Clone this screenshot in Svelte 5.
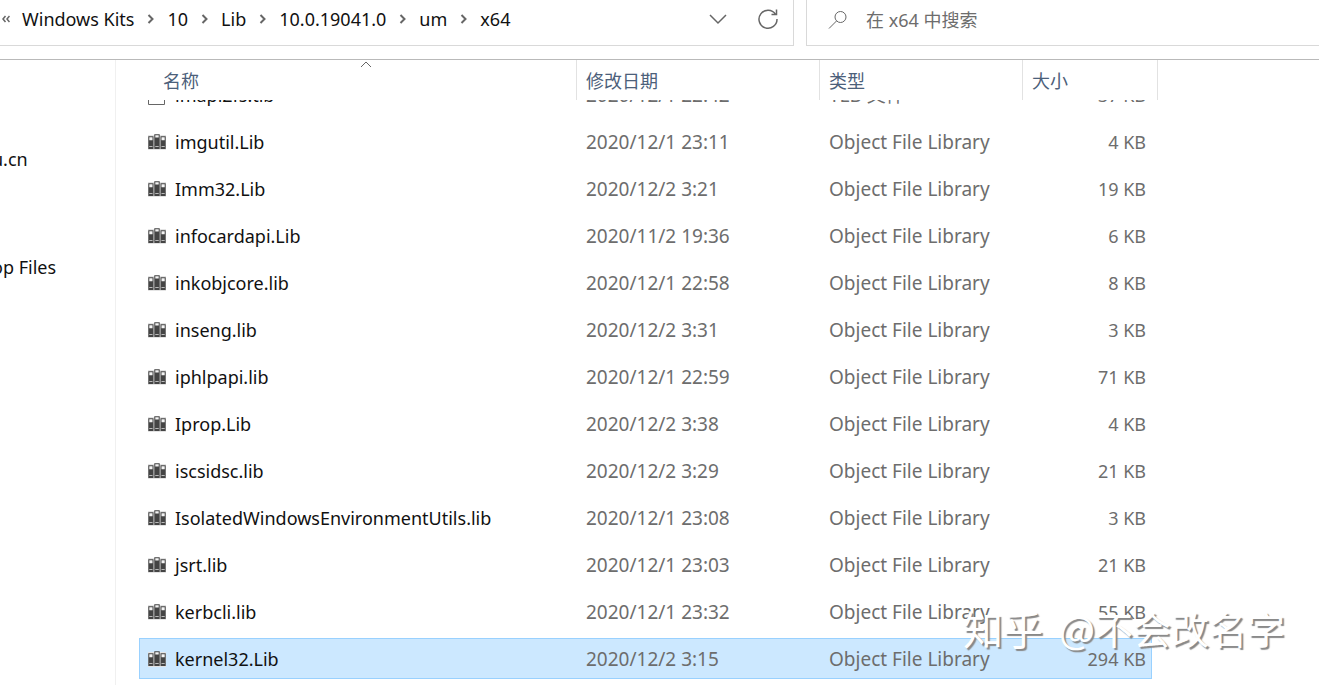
<script lang="ts">
  import { onMount } from 'svelte';

  interface FileRow {
    name: string;
    modified: string;
    type: string;
    size: string;
  }

  const library = 'Object File Library';

  const files: FileRow[] = [
    { name: 'imapi2fs.tlb', modified: '2020/12/1 22:42', type: 'TLB 文件', size: '37 KB' },
    { name: 'imgutil.Lib', modified: '2020/12/1 23:11', type: library, size: '4 KB' },
    { name: 'Imm32.Lib', modified: '2020/12/2 3:21', type: library, size: '19 KB' },
    { name: 'infocardapi.Lib', modified: '2020/11/2 19:36', type: library, size: '6 KB' },
    { name: 'inkobjcore.lib', modified: '2020/12/1 22:58', type: library, size: '8 KB' },
    { name: 'inseng.lib', modified: '2020/12/2 3:31', type: library, size: '3 KB' },
    { name: 'iphlpapi.lib', modified: '2020/12/1 22:59', type: library, size: '71 KB' },
    { name: 'Iprop.Lib', modified: '2020/12/2 3:38', type: library, size: '4 KB' },
    { name: 'iscsidsc.lib', modified: '2020/12/2 3:29', type: library, size: '21 KB' },
    { name: 'IsolatedWindowsEnvironmentUtils.lib', modified: '2020/12/1 23:08', type: library, size: '3 KB' },
    { name: 'jsrt.lib', modified: '2020/12/1 23:03', type: library, size: '21 KB' },
    { name: 'kerbcli.lib', modified: '2020/12/1 23:32', type: library, size: '55 KB' },
    { name: 'kernel32.Lib', modified: '2020/12/2 3:15', type: library, size: '294 KB' }
  ];

  const crumbs = ['Windows Kits', '10', 'Lib', '10.0.19041.0', 'um', 'x64'];
  const columns = ['名称', '修改日期', '类型', '大小'];

  let selected = $state('kernel32.Lib');
  let list: HTMLElement;

  // Open with the selected row in view
  onMount(() => {
    list.scrollTop = list.scrollHeight;
  });
</script>

<div class="explorer">
  <header class="toolbar">
    <div class="address">
      <button class="more" aria-label="Parent folders">
        <svg width="8" height="8" viewBox="0 0 8 8"><path d="M3.500 1 1 4l2.500 3M7.500 1 5 4l2.500 3" /></svg>
      </button>
      <nav class="crumbs">
        {#each crumbs as crumb, i}
          {#if i > 0}
            <svg width="7" height="10" viewBox="0 0 7 10"><path d="M1.500 1l4 4-4 4" /></svg>
          {/if}
          <a href="#{crumb}">{crumb}</a>
        {/each}
      </nav>
      <button aria-label="Recent locations">
        <svg width="18" height="18" viewBox="0 0 18 18"><path d="M1 5l8 8 8-8" /></svg>
      </button>
      <button aria-label="Refresh">
        <svg width="22" height="22" viewBox="0 0 22 22">
          <path d="M18.500 6.300A9 9 0 1 0 20 11M19.500 1.500v5h-5" />
        </svg>
      </button>
    </div>
    <label class="search">
      <svg width="20" height="20" viewBox="0 0 20 20">
        <circle cx="12.500" cy="7" r="5.500" />
        <path d="M8.600 10.900 1 18.500" />
      </svg>
      <input type="text" placeholder="在 x64 中搜索" aria-label="搜索" />
    </label>
  </header>

  <div class="body">
    <aside class="sidebar">
      <a href="#cn">u.cn</a>
      <a href="#files">op Files</a>
    </aside>

    <main bind:this={list}>
      <table>
        <colgroup>
          <col class="col-name" />
          <col class="col-date" />
          <col class="col-type" />
          <col class="col-size" />
        </colgroup>
        <thead>
          <tr>
            {#each columns as column, i}
              <th>
                <button>{column}</button>
                {#if i === 0}
                  <svg class="sort" width="12" height="7" viewBox="0 0 12 7"><path d="M1 6l5-5 5 5" /></svg>
                {/if}
              </th>
            {/each}
          </tr>
        </thead>
        <tbody>
          {#each files as file (file.name)}
            <tr class:selected={file.name === selected} onclick={() => (selected = file.name)}>
              <td>
                <div class="name">
                  {#if file.type === library}
                    <svg class="lib" width="18" height="16" viewBox="0 0 18 16">
                      <path class="halo" d="M0 1h18v15H0z" />
                      <path class="edge" d="M.3 2.200h5.200v12.800H.3zM6.300.2h5.400v14.800H6.300zM12.500 2.200h5.200v12.800h-5.200z" />
                      <path class="label" d="M1.300 3.200h3.200v3H1.300zM7.300 1.200h3.400v2.300H7.300zM13.500 3.200h3.200v3h-3.200z" />
                      <path class="band" d="M1.300 12h3.200v1H1.300zM7.300 12h3.400v1H7.300zM13.500 12h3.200v1h-3.200z" />
                    </svg>
                  {:else}
                    <svg class="blank" width="18" height="22" viewBox="0 0 18 22"><path d="M.5.5h16v20H.5z" /></svg>
                  {/if}
                  <span>{file.name}</span>
                </div>
              </td>
              <td class="wide">{file.modified}</td>
              <td class="wide">{file.type}</td>
              <td class="size">{file.size}</td>
            </tr>
          {/each}
        </tbody>
      </table>
    </main>
  </div>

  <div class="watermark">
    <span class="brand">知乎</span>
    <span>@不会改名字</span>
  </div>
</div>

<style>
  :global(body) {
    background: #fff;
  }

  .explorer {
    position: relative;
    display: flex;
    flex-direction: column;
    height: 100vh;
    overflow: hidden;
    color: #111;
    font-family: 'Noto Sans', 'Noto Sans CJK SC', sans-serif;
    font-size: 18px;
    line-height: 24px;
  }

  svg {
    flex: none;
    fill: none;
    stroke: #666;
  }

  button {
    display: flex;
    align-items: center;
    padding: 0;
    border: none;
    background: none;
    color: inherit;
    font: inherit;
  }

  a {
    color: inherit;
    text-decoration: none;
  }

  .toolbar {
    display: grid;
    grid-template-columns: 794fr 513fr;
    gap: 12px;
    padding-bottom: 13px;
    border-bottom: 1px solid #b9b9b9;
  }

  .address,
  .search {
    display: flex;
    align-items: center;
    box-sizing: border-box;
    height: 46px;
    padding-bottom: 6px;
    border-bottom: 1px solid #d9d9d9;
  }

  .address {
    gap: 39px;
    padding-right: 14px;
    padding-bottom: 8px;
    border-right: 1px solid #d9d9d9;
  }

  .more {
    margin: 0 -27px 0 2px;
  }

  .crumbs {
    display: flex;
    flex: 1;
    align-items: center;
    gap: 13px;
  }

  .crumbs svg {
    stroke-width: 2;
  }

  .address > button:last-child {
    margin-left: -9px;
  }

  .address > button svg {
    stroke-width: 1.5;
  }

  .search {
    gap: 18px;
    padding-left: 21px;
    border-left: 1px solid #d9d9d9;
  }

  .search input {
    flex: 1;
    min-width: 0;
    padding: 0;
    border: none;
    outline: none;
    font: inherit;
  }

  .search input::placeholder {
    color: #6d6d6d;
    opacity: 1;
  }

  .body {
    display: flex;
    flex: 1;
    min-height: 0;
  }

  .sidebar {
    display: flex;
    flex: none;
    flex-direction: column;
    gap: 84px;
    box-sizing: border-box;
    width: 116px;
    padding-top: 87px;
    overflow: hidden;
    border-right: 1px solid #f0f0f0;
    white-space: nowrap;
  }

  .sidebar a {
    margin-left: -8px;
  }

  main {
    flex: 1;
    padding-left: 23px;
    overflow: auto;
    scrollbar-width: none;
  }

  table {
    width: 1013px;
    table-layout: fixed;
    border-spacing: 0 6px;
  }

  .col-name {
    width: 437px;
  }

  .col-date {
    width: 243px;
  }

  .col-type {
    width: 203px;
  }

  .col-size {
    width: 130px;
  }

  th {
    position: sticky;
    z-index: 1;
    top: 0;
    height: 40px;
    padding: 2px 0 0 9px;
    border-left: 1px solid #e2e2e2;
    box-sizing: border-box;
    background: #fff;
    color: #4c607a;
    font-weight: 400;
  }

  th:first-child {
    padding-left: 24px;
    border-left: none;
  }

  /* The last divider stands just past the end of the rows */
  th:last-child::after {
    position: absolute;
    top: 0;
    right: -6px;
    height: 100%;
    border-right: 1px solid #e2e2e2;
    content: '';
  }

  .sort {
    position: absolute;
    top: 1px;
    left: calc(50% + 2px);
  }

  td {
    box-sizing: border-box;
    height: 41px;
    padding: 0 5px 0 10px;
    border: 1px solid transparent;
    border-width: 1px 0;
    color: #6d6d6d;
    white-space: nowrap;
  }

  td:first-child {
    border-left-width: 1px;
    padding-left: 8px;
    color: #111;
  }

  td:last-child {
    border-right-width: 1px;
  }

  .wide {
    font-size: 19px;
  }

  .selected td {
    border-color: #99d1ff;
    background: #cce8ff;
  }

  .name {
    display: flex;
    align-items: center;
    gap: 9px;
  }

  .lib {
    stroke: none;
  }

  .lib .halo {
    fill: #e4e4e4;
  }

  .lib .edge {
    fill: #444;
  }

  .lib .label {
    fill: #f4f4f4;
  }

  .lib .band {
    fill: #bbb;
  }

  .size {
    text-align: right;
  }

  .watermark {
    position: absolute;
    right: 34px;
    bottom: 33px;
    display: flex;
    gap: 16px;
    color: #fff;
    font-family: 'Noto Sans CJK SC', sans-serif;
    font-size: 38px;
    line-height: 48px;
    text-shadow: 2px 2px 1px #888;
    pointer-events: none;
  }

  .brand {
    font-size: 40px;
  }
</style>
